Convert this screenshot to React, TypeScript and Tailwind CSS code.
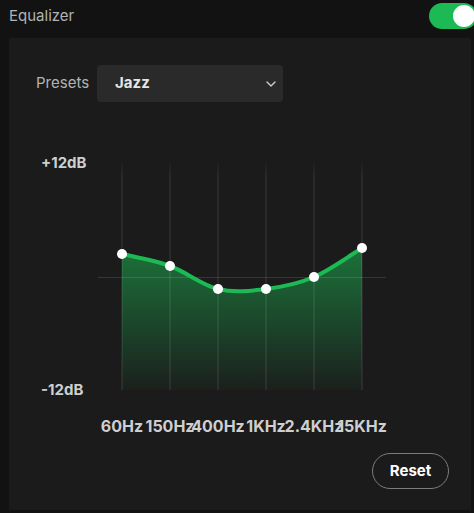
import React from 'react';
import { ChevronDown } from 'lucide-react';

const BANDS = ['60Hz', '150Hz', '400Hz', '1KHz', '2.4KHz', '15KHz'];
// gains in svg y coords (chart box is 290 x 250, center line at 127)
const POINTS: [number, number][] = [
  [24, 104],
  [72, 116],
  [120, 139],
  [168, 139],
  [216, 127],
  [264, 98],
];

const curvePath = (pts: [number, number][]) => {
  let d = `M ${pts[0][0]} ${pts[0][1]}`;
  for (let i = 0; i < pts.length - 1; i++) {
    const p0 = pts[i - 1] || pts[i];
    const p1 = pts[i];
    const p2 = pts[i + 1];
    const p3 = pts[i + 2] || p2;
    const c1x = p1[0] + (p2[0] - p0[0]) / 6;
    const c1y = p1[1] + (p2[1] - p0[1]) / 6;
    const c2x = p2[0] - (p3[0] - p1[0]) / 6;
    const c2y = p2[1] - (p3[1] - p1[1]) / 6;
    d += ` C ${c1x} ${c1y}, ${c2x} ${c2y}, ${p2[0]} ${p2[1]}`;
  }
  return d;
};

const EqChart: React.FC = () => {
  const line = curvePath(POINTS);
  const area = `${line} L 264 240 L 24 240 Z`;
  return (
    <svg width={290} height={250} viewBox="0 0 290 250" className="block overflow-visible">
      <defs>
        <linearGradient id="eqFill" gradientUnits="userSpaceOnUse" x1="0" y1="98" x2="0" y2="240">
          <stop offset="0" stopColor="#1db954" stopOpacity="0.55" />
          <stop offset="1" stopColor="#1db954" stopOpacity="0.03" />
        </linearGradient>
        <linearGradient id="gridLine" gradientUnits="userSpaceOnUse" x1="0" y1="12" x2="0" y2="28">
          <stop offset="0" stopColor="#ffffff" stopOpacity="0.02" />
          <stop offset="1" stopColor="#ffffff" stopOpacity="0.13" />
        </linearGradient>
      </defs>
      <path d={area} fill="url(#eqFill)" />
      <line x1={0} y1={127.5} x2={288} y2={127.5} stroke="#ffffff" strokeOpacity={0.12} strokeWidth={1} />
      {POINTS.map(([x]) => (
        <line key={x} x1={x} y1={12} x2={x} y2={240} stroke="url(#gridLine)" strokeWidth={1} />
      ))}
      <path d={line} fill="none" stroke="#1db954" strokeWidth={4} strokeLinecap="round" />
      {POINTS.map(([x, y]) => (
        <circle key={`d${x}`} cx={x} cy={y} r={5} fill="#ffffff" />
      ))}
    </svg>
  );
};

export default function App() {
  return (
    <div
      className="w-[474px] h-[513px] overflow-hidden bg-[#121212] text-white"
      style={{ fontFamily: 'Inter, "Noto Sans", sans-serif' }}
    >
      <div className="flex h-8 items-center justify-between pl-[9px]">
        <span className="text-[15px] text-[#b3b3b3]">Equalizer</span>
        <div className="-mr-[3px] flex h-[26px] w-[48px] items-center justify-end rounded-full bg-[#1db954] pr-[2px]">
          <div className="h-[22px] w-[22px] rounded-full bg-white" />
        </div>
      </div>

      <div className="ml-[9px] mt-[6px] flex h-[472px] w-[462px] flex-col bg-[#1b1b1b] pl-[27px] pr-[22px] pt-[27px]">
        <div className="flex items-center gap-2">
          <span className="text-[15px] text-[#b3b3b3]">Presets</span>
          <div className="flex h-[37px] w-[186px] items-center justify-between rounded-[4px] bg-[#2a2a2a] pl-[18px] pr-[4px]">
            <span className="text-[15px] font-bold text-[#e6e6e6]">Jazz</span>
            <ChevronDown size={16} strokeWidth={2} className="text-[#d0d0d0]" />
          </div>
        </div>

        <div className="mt-[48px] flex h-[250px]">
          <div className="flex w-[62px] flex-col justify-between pl-[5px] pt-[3px]">
            <span className="text-[15px] font-bold leading-5 text-[#cfcfcf]">+12dB</span>
            <span className="text-[15px] font-bold leading-5 text-[#cfcfcf]">-12dB</span>
          </div>
          <EqChart />
        </div>

        <div className="ml-[62px] mt-4 grid w-[288px] grid-cols-6">
          {BANDS.map(b => (
            <div key={b} className="flex justify-center">
              <span className="whitespace-nowrap text-[16px] font-bold leading-5 text-[#cfcfcf]">{b}</span>
            </div>
          ))}
        </div>

        <div className="mt-[17px] flex justify-end">
          <button className="flex h-[36px] w-[77px] items-center justify-center rounded-full border-[1.5px] border-[#7c7c7c] text-[15px] font-bold text-white">
            Reset
          </button>
        </div>
      </div>
    </div>
  );
}
